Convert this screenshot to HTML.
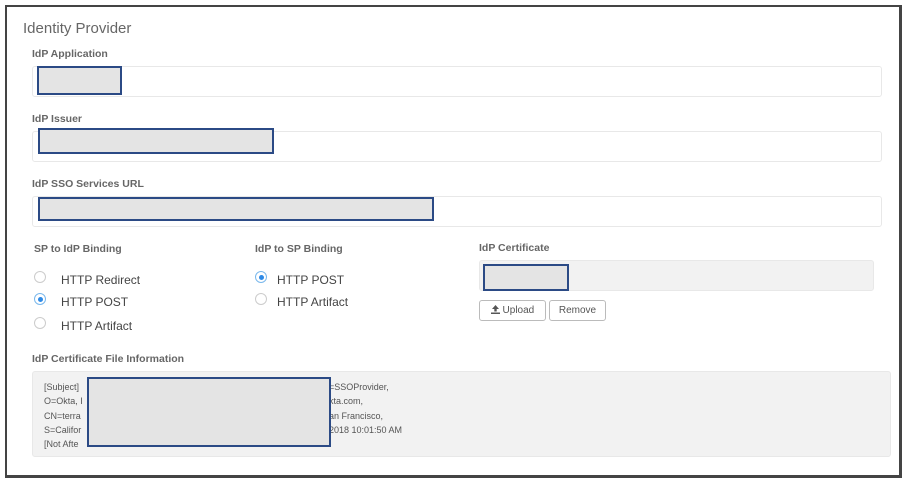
<!DOCTYPE html>
<html><head><meta charset="utf-8"><style>
*{box-sizing:border-box;margin:0;padding:0}
body{width:908px;height:487px;background:#fff;font-family:"Liberation Sans",sans-serif;position:relative;overflow:hidden}
.a{position:absolute}
.frame{left:5px;top:5px;width:897px;height:473px;border:2px solid #444;border-right-width:3px;border-bottom-width:3px}
.lbl{font-size:10.5px;font-weight:bold;color:#666}
.inp{border:1px solid #e8e8e8;border-radius:3px;background:#fff}
.red{background:#e4e4e4;border:2px solid #2b4a85}
.rad{width:12px;height:12px;border-radius:50%;border:1px solid #ccc;background:#fff}
.rad.on{border-color:#7ab8ec}
.rad.on::after{content:"";position:absolute;left:2.5px;top:2.5px;width:5px;height:5px;border-radius:50%;background:#2e8ae6}
.rt{font-size:12px;color:#444}
.btn{border:1px solid #bbb;border-radius:3px;font-size:10px;color:#555;text-align:center;line-height:20px;background:#fff}
.info{font-size:9px;color:#555;line-height:14.3px}
</style></head><body>
<div class="a frame"></div>
<div class="a" style="left:23px;top:20px;font-size:15px;color:#666">Identity Provider</div>

<div class="a lbl" style="left:32px;top:48px">IdP Application</div>
<div class="a inp" style="left:32px;top:66px;width:850px;height:31px"></div>
<div class="a red" style="left:37px;top:66px;width:85px;height:29px"></div>

<div class="a lbl" style="left:32px;top:113px">IdP Issuer</div>
<div class="a inp" style="left:32px;top:131px;width:850px;height:31px"></div>
<div class="a red" style="left:38px;top:128px;width:236px;height:26px"></div>

<div class="a lbl" style="left:32px;top:178px">IdP SSO Services URL</div>
<div class="a inp" style="left:32px;top:196px;width:850px;height:31px"></div>
<div class="a red" style="left:38px;top:197px;width:396px;height:24px"></div>

<div class="a lbl" style="left:34px;top:243px">SP to IdP Binding</div>
<div class="a rad" style="left:34px;top:271px"></div><div class="a rt" style="left:61px;top:273px">HTTP Redirect</div>
<div class="a rad on" style="left:34px;top:293px"></div><div class="a rt" style="left:61px;top:295px">HTTP POST</div>
<div class="a rad" style="left:34px;top:317px"></div><div class="a rt" style="left:61px;top:319px">HTTP Artifact</div>

<div class="a lbl" style="left:255px;top:243px">IdP to SP Binding</div>
<div class="a rad on" style="left:255px;top:271px"></div><div class="a rt" style="left:277px;top:273px">HTTP POST</div>
<div class="a rad" style="left:255px;top:293px"></div><div class="a rt" style="left:277px;top:295px">HTTP Artifact</div>

<div class="a lbl" style="left:479px;top:242px">IdP Certificate</div>
<div class="a" style="left:479px;top:260px;width:395px;height:31px;background:#f2f2f2;border:1px solid #e8e8e8;border-radius:3px"></div>
<div class="a red" style="left:483px;top:264px;width:86px;height:27px"></div>
<div class="a btn" style="left:479px;top:300px;width:67px;height:21px"><svg width="9" height="9" viewBox="0 0 9 9" style="vertical-align:-1px"><path d="M4.5 0L1 4h2.3v2.5h2.4V4H8z M0 7.5h9V9H0z" fill="#555"/></svg> Upload</div>
<div class="a btn" style="left:549px;top:300px;width:57px;height:21px">Remove</div>

<div class="a lbl" style="left:32px;top:353px">IdP Certificate File Information</div>
<div class="a" style="left:32px;top:371px;width:859px;height:86px;background:#f2f2f2;border:1px solid #e8e8e8;border-radius:3px"></div>
<div class="a info" style="left:44px;top:380px;width:400px">
<div style="position:relative">[Subject]<span class="a" style="left:285px">=SSOProvider,</span></div>
<div style="position:relative">O=Okta, I<span class="a" style="left:285px">kta.com,</span></div>
<div style="position:relative">CN=terra<span class="a" style="left:285px">an Francisco,</span></div>
<div style="position:relative">S=Califor<span class="a" style="left:285px">2018 10:01:50 AM</span></div>
<div>[Not Afte</div>
</div>
<div class="a red" style="left:87px;top:377px;width:244px;height:70px"></div>
</body></html>
